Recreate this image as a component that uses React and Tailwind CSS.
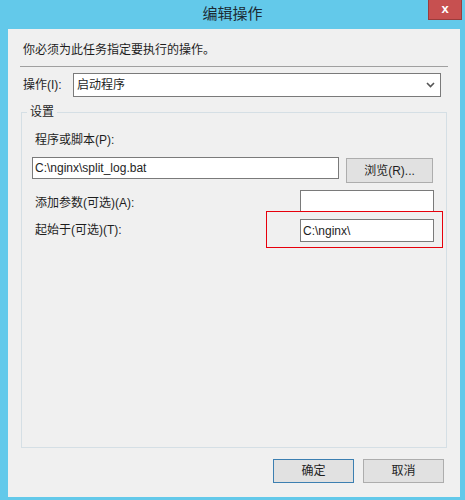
import React from 'react';

const font = { fontFamily: '"Liberation Sans", "Noto Sans CJK SC", sans-serif' };

export default function App() {
  return (
    <div
      className="relative w-[465px] h-[500px] bg-[#63c9ea] flex flex-col pl-[8px] pr-[5px] pb-[3px] text-[12px] text-[#1e1e1e]"
      style={font}
    >
      {/* title bar */}
      <div className="h-[29px] shrink-0 flex items-center justify-center text-[15px] text-[#1c2a33] pb-[1px] pr-[3px]">
        编辑操作
      </div>
      <div className="absolute top-0 left-[428px] w-[34px] h-[20px] bg-[#c75050] border border-[#9a3c3c] border-t-0 flex items-center justify-center">
        <span className="text-white font-bold text-[13px] leading-none -mt-[2px]">x</span>
      </div>

      {/* client */}
      <div className="flex-1 bg-[#f0f0f0] flex flex-col">
        <div className="mt-[13px] ml-[15px] leading-[16px]">你必须为此任务指定要执行的操作。</div>
        <div className="mt-[8px] mx-[12px] h-[1px] bg-[#a0a0a0] shrink-0" />

        <div className="mt-[6px] ml-[15px] mr-[19px] flex items-center h-[24px]">
          <span className="w-[50px] shrink-0">操作(I):</span>
          <div className="flex-1 h-[24px] bg-white border border-[#7a7a7a] flex items-center pl-[3px] pr-[5px]">
            <span className="flex-1">启动程序</span>
            <svg width="9" height="6" viewBox="0 0 9 6">
              <path d="M1 1 L4.5 4.5 L8 1" stroke="#555" strokeWidth="1.6" fill="none" />
            </svg>
          </div>
        </div>

        <fieldset className="mt-[7px] ml-[13px] mr-[13px] h-[344px] border border-[#d5dfe5] pl-[10px] pr-[3px]">
          <legend className="-ml-[5px] px-[3px] leading-[16px]">设置</legend>
          <div className="mt-[12px] ml-[3px] leading-[16px]">程序或脚本(P):</div>
          <div className="mt-[9px] flex items-start">
            <div className="w-[307px] h-[22px] bg-white border border-[#7a7a7a] flex items-center pl-[2px]">
              C:\nginx\split_log.bat
            </div>
            <button className="ml-[7px] mt-[1px] w-[87px] h-[25px] bg-[#e1e1e1] border border-[#adadad] flex items-center justify-center">
              浏览(R)...
            </button>
          </div>
          <div className="mt-[7px] flex items-center h-[22px]">
            <span className="ml-[3px] flex-1 pt-[4px]">添加参数(可选)(A):</span>
            <div className="w-[134px] h-[22px] bg-white border border-[#7a7a7a] mr-[9px]" />
          </div>
          <div className="-mt-[1px] flex items-center">
            <span className="ml-[3px] flex-1">起始于(可选)(T):</span>
            <div className="w-[177px] border border-solid border-red-600 pl-[33px] pr-[8px] pt-[7px] pb-[5px]">
              <div className="w-[134px] h-[23px] bg-white border border-[#7a7a7a] flex items-center pl-[2px]">
                C:\nginx\
              </div>
            </div>
          </div>
        </fieldset>

        <div className="mt-[11px] mr-[16px] flex justify-end gap-[9px]">
          <button className="w-[81px] h-[24px] bg-[#e1e1e1] border border-[#3c7fb1] flex items-center justify-center">
            确定
          </button>
          <button className="w-[81px] h-[24px] bg-[#e1e1e1] border border-[#adadad] flex items-center justify-center">
            取消
          </button>
        </div>
      </div>
    </div>
  );
}
